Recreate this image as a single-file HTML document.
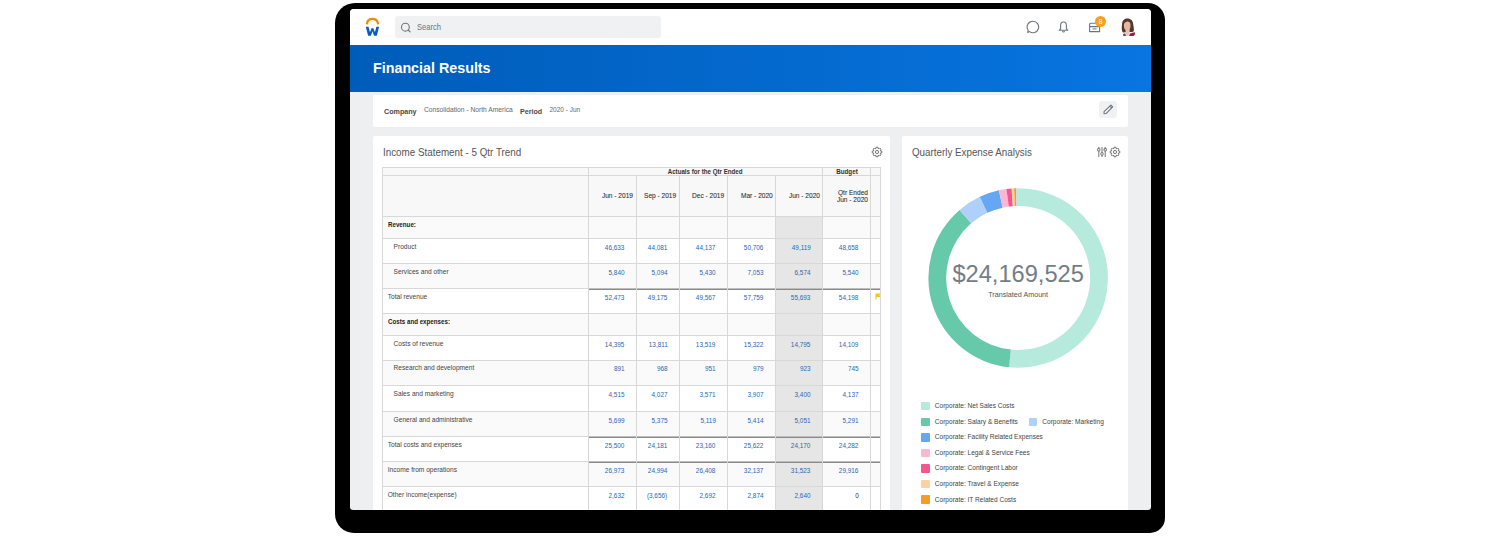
<!DOCTYPE html><html><head><meta charset="utf-8"><title>Financial Results</title><style>
*{box-sizing:border-box;margin:0;padding:0}
html,body{width:1500px;height:537px;overflow:hidden;background:#fff}
body{position:relative;font-family:"Liberation Sans",sans-serif;color:#333}
.abs{position:absolute}
.t{position:absolute;white-space:nowrap;line-height:1}
.n{position:absolute;white-space:nowrap;line-height:1;text-align:right;font-size:7px;color:#2f6fb7;transform:scaleX(0.915);transform-origin:100% 0}
.l{position:absolute;white-space:nowrap;line-height:1;font-size:6.5px;color:#333}
.hl{position:absolute;background:#d8d8d8;height:1px}
.vl{position:absolute;background:#d8d8d8;width:1px}
</style></head><body>
<div class="abs" style="left:335px;top:3px;width:830px;height:529.7px;background:#000;border-radius:20px 17px 15px 19px"></div>
<div class="abs" style="left:350px;top:9px;width:801px;height:501px;background:#edeff1;border-radius:4px 4px 3px 3px;overflow:hidden">
<div class="abs" style="left:-350px;top:-9px;width:1500px;height:537px">
<div class="abs" style="left:350px;top:9px;width:801px;height:36px;background:#fff"></div>
<svg class="abs" style="left:364px;top:16px" width="18" height="22" viewBox="0 0 18 22">
<path d="M2.95 7.5 A5.6 5.6 0 0 1 13.95 7.5" fill="none" stroke="#f38a00" stroke-width="2.2" stroke-linecap="round"/>
<path d="M1.8 10.8 H4.5 L6 16.3 L7.5 12.3 H9.4 L10.9 16.3 L12.4 10.8 H15.1 L12.8 19.8 H10 L8.45 15.2 L6.9 19.8 H4.1 Z" fill="#0b5cbd"/>
</svg>
<div class="abs" style="left:395px;top:16px;width:266px;height:22px;background:#f0f1f2;border-radius:3px"></div>
<svg class="abs" style="left:400px;top:21.5px" width="12" height="12" viewBox="0 0 12 12">
<circle cx="5.4" cy="5.2" r="3.9" fill="none" stroke="#6b7580" stroke-width="1.1"/>
<path d="M8.2 8 L10.1 9.9" stroke="#6b7580" stroke-width="1.2" stroke-linecap="round"/></svg>
<div class="t" style="left:417px;top:22.6px;font-size:8.5px;color:#6b7580;transform:scaleX(0.895);transform-origin:0 0">Search</div>
<svg class="abs" style="left:1026px;top:20px" width="14" height="14" viewBox="0 0 14 14">
<path d="M7 1.3 A5.7 5.7 0 1 1 3.6 11.6 L1.6 12.4 L2.2 10.3 A5.7 5.7 0 0 1 7 1.3 Z" fill="none" stroke="#6b7580" stroke-width="1.1" stroke-linejoin="round"/></svg>
<svg class="abs" style="left:1058px;top:21px" width="11" height="12" viewBox="0 0 11 12">
<path d="M5.5 1 C3.4 1 2.6 2.8 2.6 4.6 V7.6 L1.2 9.3 H9.8 L8.4 7.6 V4.6 C8.4 2.8 7.6 1 5.5 1 Z" fill="none" stroke="#6b7580" stroke-width="1.1" stroke-linejoin="round"/>
<path d="M4.3 10.2 A1.3 1.3 0 0 0 6.7 10.2" fill="none" stroke="#6b7580" stroke-width="1.1"/></svg>
<svg class="abs" style="left:1088px;top:22px" width="14" height="11" viewBox="0 0 14 11">
<path d="M2.6 1.3 H10.6 Q11.6 1.3 11.6 2.3 V9.6 H1.6 V2.3 Q1.6 1.3 2.6 1.3 Z M1.6 4.6 H11.6" fill="none" stroke="#6b7580" stroke-width="1.1" stroke-linejoin="round"/>
<path d="M4.6 6.9 H8.6" stroke="#6b7580" stroke-width="1"/></svg>
<div class="abs" style="left:1095px;top:15.7px;width:11px;height:11px;border-radius:50%;background:#f7a11f"></div>
<div class="t" style="left:1095px;top:18.8px;width:11px;text-align:center;font-size:6.5px;color:#fff">8</div>
<svg class="abs" style="left:1118px;top:16px" width="20" height="22" viewBox="0 0 20 22">
<path d="M9.3 2.4 C5.8 2.4 4.2 5 4 8.2 C3.8 11 3.4 13.5 4.6 16.2 C6 17.2 7.5 16 9 15.8 C11 15.6 13.5 16.8 15.8 15.2 C16.2 12.5 15.4 10.5 15.2 8 C15 4.8 13 2.4 9.3 2.4 Z" fill="#55382a"/>
<path d="M7.6 13 H11.6 V17.5 L9.6 19 L7.6 17.5 Z" fill="#e7c4b0"/>
<path d="M6.8 17 C8 18.8 11.5 18.8 13 16.8 L17 16.4 C17.2 18 16.6 19.2 15.8 19.8 H5.3 C5.2 18.8 5.6 17.6 6.8 17 Z" fill="#e7c4b0"/>
<path d="M12.2 17.6 L16.8 16.2 C17.2 17.8 16.6 19.2 15.6 19.9 L11.2 19.9 Z" fill="#a3134f"/>
<path d="M5.2 18 L7.2 17.4 L7.8 19.9 H5.3 Z" fill="#b21d5c"/>
<ellipse cx="9.2" cy="9.6" rx="3.3" ry="4.8" fill="#e2b8a2"/>
<path d="M5.8 8 C6.2 4.6 8 3.6 10 3.8 C12 4 12.8 5.6 12.8 7.6 C11.8 5.8 10.5 5.2 9 5.6 C7.6 6 6.6 6.8 5.8 8 Z" fill="#55382a"/>
</svg>
<div class="abs" style="left:350px;top:45px;width:801px;height:46.6px;background:linear-gradient(to right,#005cb9,#0875e1)"></div>
<div class="t" style="left:373px;top:60.2px;font-size:15px;font-weight:bold;color:#fff;transform:scaleX(0.953);transform-origin:0 0">Financial Results</div>
<div class="abs" style="left:373px;top:94.5px;width:755px;height:32px;background:#fff;border-radius:2px"></div>
<div class="t" style="left:384px;top:108.2px;font-size:8px;font-weight:bold;color:#494949;transform:scaleX(0.894);transform-origin:0 0">Company</div>
<div class="t" style="left:424px;top:107.3px;font-size:6.7px;color:#666">Consolidation - North America</div>
<div class="t" style="left:520px;top:108.2px;font-size:8px;font-weight:bold;color:#494949;transform:scaleX(0.8875);transform-origin:0 0">Period</div>
<div class="t" style="left:549.5px;top:107.3px;font-size:6.5px;color:#666">2020 - Jun</div>
<div class="abs" style="left:1099px;top:100.5px;width:18px;height:17.5px;background:#f0f1f2;border-radius:3px"></div>
<svg class="abs" style="left:1102px;top:103px" width="12" height="12" viewBox="0 0 12 12">
<path d="M2.1 10.7 L2.0 8.6 L8.9 2.1 L10.7 3.9 L4.1 10.6 Z M7.9 3.1 L9.7 4.9" fill="none" stroke="#6b7580" stroke-width="1.05" stroke-linejoin="round"/></svg>
<div class="abs" style="left:373px;top:136px;width:517px;height:390px;background:#fff;border-radius:2px"></div>
<div class="t" style="left:382.7px;top:146.6px;font-size:11.1px;color:#555;transform:scaleX(0.886);transform-origin:0 0">Income Statement - 5 Qtr Trend</div>
<svg class="abs" style="left:871px;top:145.5px" width="12" height="12" viewBox="0 0 12 12">
<path d="M5.07 1.24 L6.93 1.24 L6.88 2.35 L7.96 2.80 L8.71 1.98 L10.02 3.29 L9.20 4.04 L9.65 5.12 L10.76 5.07 L10.76 6.93 L9.65 6.88 L9.20 7.96 L10.02 8.71 L8.71 10.02 L7.96 9.20 L6.88 9.65 L6.93 10.76 L5.07 10.76 L5.12 9.65 L4.04 9.20 L3.29 10.02 L1.98 8.71 L2.80 7.96 L2.35 6.88 L1.24 6.93 L1.24 5.07 L2.35 5.12 L2.80 4.04 L1.98 3.29 L3.29 1.98 L4.04 2.80 L5.12 2.35 Z" fill="none" stroke="#666" stroke-width="0.9" stroke-linejoin="round"/>
<circle cx="6" cy="6" r="1.6" fill="none" stroke="#666" stroke-width="0.9"/></svg>
<div class="abs" style="left:383px;top:167.3px;width:497.4px;height:49.099999999999994px;background:#f8f8f8"></div>
<div class="abs" style="left:383px;top:216.4px;width:497.4px;height:22.099999999999994px;background:#fafafa"></div>
<div class="abs" style="left:775.5px;top:216.4px;width:47.10000000000002px;height:22.099999999999994px;background:#e6e6e6"></div>
<div class="abs" style="left:383px;top:238.5px;width:497.4px;height:24.80000000000001px;background:#fff"></div>
<div class="abs" style="left:775.5px;top:238.5px;width:47.10000000000002px;height:24.80000000000001px;background:#e6e6e6"></div>
<div class="abs" style="left:383px;top:263.3px;width:497.4px;height:25.0px;background:#fafafa"></div>
<div class="abs" style="left:775.5px;top:263.3px;width:47.10000000000002px;height:25.0px;background:#e6e6e6"></div>
<div class="abs" style="left:383px;top:288.3px;width:497.4px;height:25.0px;background:#fff"></div>
<div class="abs" style="left:775.5px;top:288.3px;width:47.10000000000002px;height:25.0px;background:#e6e6e6"></div>
<div class="abs" style="left:383px;top:313.3px;width:497.4px;height:22.0px;background:#fafafa"></div>
<div class="abs" style="left:775.5px;top:313.3px;width:47.10000000000002px;height:22.0px;background:#e6e6e6"></div>
<div class="abs" style="left:383px;top:335.3px;width:497.4px;height:24.69999999999999px;background:#fff"></div>
<div class="abs" style="left:775.5px;top:335.3px;width:47.10000000000002px;height:24.69999999999999px;background:#e6e6e6"></div>
<div class="abs" style="left:383px;top:360px;width:497.4px;height:25.600000000000023px;background:#fafafa"></div>
<div class="abs" style="left:775.5px;top:360px;width:47.10000000000002px;height:25.600000000000023px;background:#e6e6e6"></div>
<div class="abs" style="left:383px;top:385.6px;width:497.4px;height:25.69999999999999px;background:#fff"></div>
<div class="abs" style="left:775.5px;top:385.6px;width:47.10000000000002px;height:25.69999999999999px;background:#e6e6e6"></div>
<div class="abs" style="left:383px;top:411.3px;width:497.4px;height:25.099999999999966px;background:#fafafa"></div>
<div class="abs" style="left:775.5px;top:411.3px;width:47.10000000000002px;height:25.099999999999966px;background:#e6e6e6"></div>
<div class="abs" style="left:383px;top:436.4px;width:497.4px;height:25.0px;background:#fff"></div>
<div class="abs" style="left:775.5px;top:436.4px;width:47.10000000000002px;height:25.0px;background:#e6e6e6"></div>
<div class="abs" style="left:383px;top:461.4px;width:497.4px;height:24.900000000000034px;background:#fafafa"></div>
<div class="abs" style="left:775.5px;top:461.4px;width:47.10000000000002px;height:24.900000000000034px;background:#e6e6e6"></div>
<div class="abs" style="left:383px;top:486.3px;width:497.4px;height:25.0px;background:#fff"></div>
<div class="abs" style="left:775.5px;top:486.3px;width:47.10000000000002px;height:25.0px;background:#e6e6e6"></div>
<div class="l" style="left:387.7px;top:221.0px;font-weight:bold;color:#222;font-size:7px;transform:scaleX(0.885);transform-origin:0 0">Revenue:</div>
<div class="l" style="left:393.6px;top:243.8px;font-size:6.6px;color:#444">Product</div>
<div class="n" style="right:875.4px;top:243.8px;color:#2668b5">46,633</div>
<div class="n" style="right:832.4px;top:243.8px;color:#2668b5">44,081</div>
<div class="n" style="right:784.3px;top:243.8px;color:#2668b5">44,137</div>
<div class="n" style="right:736.3px;top:243.8px;color:#2668b5">50,706</div>
<div class="n" style="right:689.1999999999999px;top:243.8px;color:#2668b5">49,119</div>
<div class="n" style="right:641.3px;top:243.8px;color:#2668b5">48,658</div>
<div class="l" style="left:393.6px;top:268.6px;font-size:6.6px;color:#444">Services and other</div>
<div class="n" style="right:875.4px;top:268.6px;color:#2668b5">5,840</div>
<div class="n" style="right:832.4px;top:268.6px;color:#2668b5">5,094</div>
<div class="n" style="right:784.3px;top:268.6px;color:#2668b5">5,430</div>
<div class="n" style="right:736.3px;top:268.6px;color:#2668b5">7,053</div>
<div class="n" style="right:689.1999999999999px;top:268.6px;color:#2668b5">6,574</div>
<div class="n" style="right:641.3px;top:268.6px;color:#2668b5">5,540</div>
<div class="l" style="left:387.7px;top:293.6px;font-size:6.6px;color:#444">Total revenue</div>
<div class="n" style="right:875.4px;top:293.6px;color:#2668b5">52,473</div>
<div class="n" style="right:832.4px;top:293.6px;color:#2668b5">49,175</div>
<div class="n" style="right:784.3px;top:293.6px;color:#2668b5">49,567</div>
<div class="n" style="right:736.3px;top:293.6px;color:#2668b5">57,759</div>
<div class="n" style="right:689.1999999999999px;top:293.6px;color:#2668b5">55,693</div>
<div class="n" style="right:641.3px;top:293.6px;color:#2668b5">54,198</div>
<div class="l" style="left:387.7px;top:317.90000000000003px;font-weight:bold;color:#222;font-size:7px;transform:scaleX(0.885);transform-origin:0 0">Costs and expenses:</div>
<div class="l" style="left:393.6px;top:340.6px;font-size:6.6px;color:#444">Costs of revenue</div>
<div class="n" style="right:875.4px;top:340.6px;color:#2668b5">14,395</div>
<div class="n" style="right:832.4px;top:340.6px;color:#2668b5">13,811</div>
<div class="n" style="right:784.3px;top:340.6px;color:#2668b5">13,519</div>
<div class="n" style="right:736.3px;top:340.6px;color:#2668b5">15,322</div>
<div class="n" style="right:689.1999999999999px;top:340.6px;color:#2668b5">14,795</div>
<div class="n" style="right:641.3px;top:340.6px;color:#2668b5">14,109</div>
<div class="l" style="left:393.6px;top:365.3px;font-size:6.6px;color:#444">Research and development</div>
<div class="n" style="right:875.4px;top:365.3px;color:#2668b5">891</div>
<div class="n" style="right:832.4px;top:365.3px;color:#2668b5">968</div>
<div class="n" style="right:784.3px;top:365.3px;color:#2668b5">951</div>
<div class="n" style="right:736.3px;top:365.3px;color:#2668b5">979</div>
<div class="n" style="right:689.1999999999999px;top:365.3px;color:#2668b5">923</div>
<div class="n" style="right:641.3px;top:365.3px;color:#2668b5">745</div>
<div class="l" style="left:393.6px;top:390.90000000000003px;font-size:6.6px;color:#444">Sales and marketing</div>
<div class="n" style="right:875.4px;top:390.90000000000003px;color:#2668b5">4,515</div>
<div class="n" style="right:832.4px;top:390.90000000000003px;color:#2668b5">4,027</div>
<div class="n" style="right:784.3px;top:390.90000000000003px;color:#2668b5">3,571</div>
<div class="n" style="right:736.3px;top:390.90000000000003px;color:#2668b5">3,907</div>
<div class="n" style="right:689.1999999999999px;top:390.90000000000003px;color:#2668b5">3,400</div>
<div class="n" style="right:641.3px;top:390.90000000000003px;color:#2668b5">4,137</div>
<div class="l" style="left:393.6px;top:416.6px;font-size:6.6px;color:#444">General and administrative</div>
<div class="n" style="right:875.4px;top:416.6px;color:#2668b5">5,699</div>
<div class="n" style="right:832.4px;top:416.6px;color:#2668b5">5,375</div>
<div class="n" style="right:784.3px;top:416.6px;color:#2668b5">5,119</div>
<div class="n" style="right:736.3px;top:416.6px;color:#2668b5">5,414</div>
<div class="n" style="right:689.1999999999999px;top:416.6px;color:#2668b5">5,051</div>
<div class="n" style="right:641.3px;top:416.6px;color:#2668b5">5,291</div>
<div class="l" style="left:387.7px;top:441.7px;font-size:6.6px;color:#444">Total costs and expenses</div>
<div class="n" style="right:875.4px;top:441.7px;color:#2668b5">25,500</div>
<div class="n" style="right:832.4px;top:441.7px;color:#2668b5">24,181</div>
<div class="n" style="right:784.3px;top:441.7px;color:#2668b5">23,160</div>
<div class="n" style="right:736.3px;top:441.7px;color:#2668b5">25,622</div>
<div class="n" style="right:689.1999999999999px;top:441.7px;color:#2668b5">24,170</div>
<div class="n" style="right:641.3px;top:441.7px;color:#2668b5">24,282</div>
<div class="l" style="left:387.7px;top:466.7px;font-size:6.6px;color:#444">Income from operations</div>
<div class="n" style="right:875.4px;top:466.7px;color:#2668b5">26,973</div>
<div class="n" style="right:832.4px;top:466.7px;color:#2668b5">24,994</div>
<div class="n" style="right:784.3px;top:466.7px;color:#2668b5">26,408</div>
<div class="n" style="right:736.3px;top:466.7px;color:#2668b5">32,137</div>
<div class="n" style="right:689.1999999999999px;top:466.7px;color:#2668b5">31,523</div>
<div class="n" style="right:641.3px;top:466.7px;color:#2668b5">29,916</div>
<div class="l" style="left:387.7px;top:491.6px;font-size:6.6px;color:#444">Other income(expense)</div>
<div class="n" style="right:875.4px;top:491.6px;color:#2668b5">2,632</div>
<div class="n" style="right:832.4px;top:491.6px;color:#2668b5">(3,656)</div>
<div class="n" style="right:784.3px;top:491.6px;color:#2668b5">2,692</div>
<div class="n" style="right:736.3px;top:491.6px;color:#2668b5">2,874</div>
<div class="n" style="right:689.1999999999999px;top:491.6px;color:#2668b5">2,640</div>
<div class="n" style="right:641.3px;top:491.6px;color:#333">0</div>
<div class="hl" style="left:383px;top:167px;width:497.4px"></div>
<div class="hl" style="left:383px;top:175px;width:497.4px"></div>
<div class="hl" style="left:383px;top:215.9px;width:497.4px"></div>
<div class="hl" style="left:383px;top:238.0px;width:497.4px"></div>
<div class="hl" style="left:383px;top:262.8px;width:497.4px"></div>
<div class="hl" style="left:383px;top:287.8px;width:497.4px"></div>
<div class="hl" style="left:383px;top:312.8px;width:497.4px"></div>
<div class="hl" style="left:383px;top:334.8px;width:497.4px"></div>
<div class="hl" style="left:383px;top:359.5px;width:497.4px"></div>
<div class="hl" style="left:383px;top:385.1px;width:497.4px"></div>
<div class="hl" style="left:383px;top:410.8px;width:497.4px"></div>
<div class="hl" style="left:383px;top:435.9px;width:497.4px"></div>
<div class="hl" style="left:383px;top:460.9px;width:497.4px"></div>
<div class="hl" style="left:383px;top:485.8px;width:497.4px"></div>
<div class="abs" style="left:588.4px;top:288px;width:292.0px;height:2px;background:linear-gradient(#bdbdbd 50%,#8a8a8a 50%)"></div>
<div class="abs" style="left:588.4px;top:436px;width:292.0px;height:2px;background:linear-gradient(#bdbdbd 50%,#8a8a8a 50%)"></div>
<div class="abs" style="left:588.4px;top:461px;width:292.0px;height:2px;background:linear-gradient(#bdbdbd 50%,#8a8a8a 50%)"></div>
<div class="vl" style="left:382px;top:167px;height:350px"></div>
<div class="vl" style="left:587.9px;top:167px;height:350px"></div>
<div class="vl" style="left:635.9px;top:175px;height:350px"></div>
<div class="vl" style="left:678.9px;top:175px;height:350px"></div>
<div class="vl" style="left:727.0px;top:175px;height:350px"></div>
<div class="vl" style="left:775.0px;top:175px;height:350px"></div>
<div class="vl" style="left:822.1px;top:167px;height:350px"></div>
<div class="vl" style="left:870.0px;top:167px;height:350px"></div>
<div class="vl" style="left:879.9px;top:167px;height:350px"></div>
<div class="t" style="left:588.4px;top:168.8px;width:234.2px;text-align:center;font-size:6.6px;font-weight:bold;color:#333;transform:scaleX(0.937)">Actuals for the Qtr Ended</div>
<div class="t" style="left:822.6px;top:168.8px;width:47.9px;text-align:center;font-size:6.6px;font-weight:bold;color:#333;transform:scaleX(0.95)">Budget</div>
<div class="t" style="right:866.6px;top:192.4px;font-size:7.2px;color:#2a2a2a;-webkit-text-stroke:0.07px #2a2a2a;transform:scaleX(0.915);transform-origin:100% 0">Jun - 2019</div>
<div class="t" style="right:823.6px;top:192.4px;font-size:7.2px;color:#2a2a2a;-webkit-text-stroke:0.07px #2a2a2a;transform:scaleX(0.915);transform-origin:100% 0">Sep - 2019</div>
<div class="t" style="right:775.5px;top:192.4px;font-size:7.2px;color:#2a2a2a;-webkit-text-stroke:0.07px #2a2a2a;transform:scaleX(0.915);transform-origin:100% 0">Dec - 2019</div>
<div class="t" style="right:727.5px;top:192.4px;font-size:7.2px;color:#2a2a2a;-webkit-text-stroke:0.07px #2a2a2a;transform:scaleX(0.915);transform-origin:100% 0">Mar - 2020</div>
<div class="t" style="right:680.4px;top:192.4px;font-size:7.2px;color:#2a2a2a;-webkit-text-stroke:0.07px #2a2a2a;transform:scaleX(0.915);transform-origin:100% 0">Jun - 2020</div>
<div class="t" style="right:632.5px;top:188.6px;font-size:7.2px;color:#2a2a2a;-webkit-text-stroke:0.07px #2a2a2a;text-align:right;line-height:7.6px;transform:scaleX(0.915);transform-origin:100% 0">Qtr Ended<br>Jun - 2020</div>
<svg class="abs" style="left:874.5px;top:293px" width="6" height="7" viewBox="0 0 6 7"><path d="M0.5 0.5 H5.5 L4.5 2.2 L5.5 4 H1.5 V6.5 H0.5 Z" fill="#f7c21b"/></svg>
<div class="abs" style="left:902px;top:136px;width:226px;height:390px;background:#fff;border-radius:2px"></div>
<div class="t" style="left:911.7px;top:146.6px;font-size:11.1px;color:#555;transform:scaleX(0.883);transform-origin:0 0">Quarterly Expense Analysis</div>
<svg class="abs" style="left:1095.5px;top:145.5px" width="12" height="12" viewBox="0 0 12 12">
<path d="M2.8 1 V11 M6 1 V11 M9.2 1 V11" stroke="#666" stroke-width="0.9"/>
<rect x="1.7" y="2.4" width="2.2" height="2.6" rx="0.4" fill="#fff" stroke="#666" stroke-width="0.9"/>
<rect x="4.9" y="6.6" width="2.2" height="2.6" rx="0.4" fill="#fff" stroke="#666" stroke-width="0.9"/>
<rect x="8.1" y="2.4" width="2.2" height="2.6" rx="0.4" fill="#fff" stroke="#666" stroke-width="1"/>
</svg>
<svg class="abs" style="left:1109px;top:145.5px" width="12" height="12" viewBox="0 0 12 12">
<path d="M5.07 1.24 L6.93 1.24 L6.88 2.35 L7.96 2.80 L8.71 1.98 L10.02 3.29 L9.20 4.04 L9.65 5.12 L10.76 5.07 L10.76 6.93 L9.65 6.88 L9.20 7.96 L10.02 8.71 L8.71 10.02 L7.96 9.20 L6.88 9.65 L6.93 10.76 L5.07 10.76 L5.12 9.65 L4.04 9.20 L3.29 10.02 L1.98 8.71 L2.80 7.96 L2.35 6.88 L1.24 6.93 L1.24 5.07 L2.35 5.12 L2.80 4.04 L1.98 3.29 L3.29 1.98 L4.04 2.80 L5.12 2.35 Z" fill="none" stroke="#666" stroke-width="0.9" stroke-linejoin="round"/>
<circle cx="6" cy="6" r="1.6" fill="none" stroke="#666" stroke-width="0.9"/></svg>
<svg class="abs" style="left:900px;top:180px" width="240" height="200" viewBox="0 0 240 200"><path d="M118.15 8.20 A89.75 89.75 0 1 1 109.08 187.24 L110.87 169.58 A72.0 72.0 0 1 0 118.15 25.95 Z" fill="#b5eadc"/><path d="M109.08 187.24 A89.75 89.75 0 0 1 59.62 29.91 L71.20 43.36 A72.0 72.0 0 0 0 110.87 169.58 Z" fill="#66c9aa"/><path d="M59.62 29.91 A89.75 89.75 0 0 1 79.79 16.81 L87.38 32.86 A72.0 72.0 0 0 0 71.20 43.36 Z" fill="#aed0fb"/><path d="M79.79 16.81 A89.75 89.75 0 0 1 98.88 10.29 L102.69 27.63 A72.0 72.0 0 0 0 87.38 32.86 Z" fill="#66a7f4"/><path d="M98.88 10.29 A89.75 89.75 0 0 1 106.44 8.97 L108.75 26.57 A72.0 72.0 0 0 0 102.69 27.63 Z" fill="#fdb7d4"/><path d="M106.44 8.97 A89.75 89.75 0 0 1 111.58 8.44 L112.88 26.14 A72.0 72.0 0 0 0 108.75 26.57 Z" fill="#f5558f"/><path d="M111.58 8.44 A89.75 89.75 0 0 1 114.08 8.29 L114.88 26.02 A72.0 72.0 0 0 0 112.88 26.14 Z" fill="#fdd29e"/><path d="M114.08 8.29 A89.75 89.75 0 0 1 116.11 8.22 L116.52 25.97 A72.0 72.0 0 0 0 114.88 26.02 Z" fill="#f59d22"/><path d="M116.11 8.22 A89.75 89.75 0 0 1 118.15 8.20 L118.15 25.95 A72.0 72.0 0 0 0 116.52 25.97 Z" fill="#b9e3ea"/></svg>
<div class="t" style="left:900px;top:263.2px;width:236.3px;text-align:center;font-size:23.65px;color:#737d88">$24,169,525</div>
<div class="t" style="left:900px;top:291.9px;width:236.3px;text-align:center;font-size:7.18px;color:#555">Translated Amount</div>
<div class="abs" style="left:921.3px;top:401.90000000000003px;width:8.7px;height:8.5px;background:#b5eadc;border-radius:1px"></div>
<div class="t" style="left:934.8px;top:403.2px;font-size:6.55px;color:#444">Corporate: Net Sales Costs</div>
<div class="abs" style="left:921.3px;top:417.5px;width:8.7px;height:8.5px;background:#66c9aa;border-radius:1px"></div>
<div class="t" style="left:934.8px;top:418.79999999999995px;font-size:6.55px;color:#444">Corporate: Salary &amp; Benefits</div>
<div class="abs" style="left:1028.8px;top:417.5px;width:8.7px;height:8.5px;background:#aed0fb;border-radius:1px"></div>
<div class="t" style="left:1042.3px;top:418.79999999999995px;font-size:6.55px;color:#444">Corporate: Marketing</div>
<div class="abs" style="left:921.3px;top:433.1px;width:8.7px;height:8.5px;background:#66a7f4;border-radius:1px"></div>
<div class="t" style="left:934.8px;top:434.4px;font-size:6.55px;color:#444">Corporate: Facility Related Expenses</div>
<div class="abs" style="left:921.3px;top:448.5px;width:8.7px;height:8.5px;background:#fdb7d4;border-radius:1px"></div>
<div class="t" style="left:934.8px;top:449.79999999999995px;font-size:6.55px;color:#444">Corporate: Legal &amp; Service Fees</div>
<div class="abs" style="left:921.3px;top:464.1px;width:8.7px;height:8.5px;background:#f5558f;border-radius:1px"></div>
<div class="t" style="left:934.8px;top:465.4px;font-size:6.55px;color:#444">Corporate: Contingent Labor</div>
<div class="abs" style="left:921.3px;top:479.70000000000005px;width:8.7px;height:8.5px;background:#fdd29e;border-radius:1px"></div>
<div class="t" style="left:934.8px;top:481.0px;font-size:6.55px;color:#444">Corporate: Travel &amp; Expense</div>
<div class="abs" style="left:921.3px;top:495.3px;width:8.7px;height:8.5px;background:#f59d22;border-radius:1px"></div>
<div class="t" style="left:934.8px;top:496.59999999999997px;font-size:6.55px;color:#444">Corporate: IT Related Costs</div>
</div></div>
</body></html>
